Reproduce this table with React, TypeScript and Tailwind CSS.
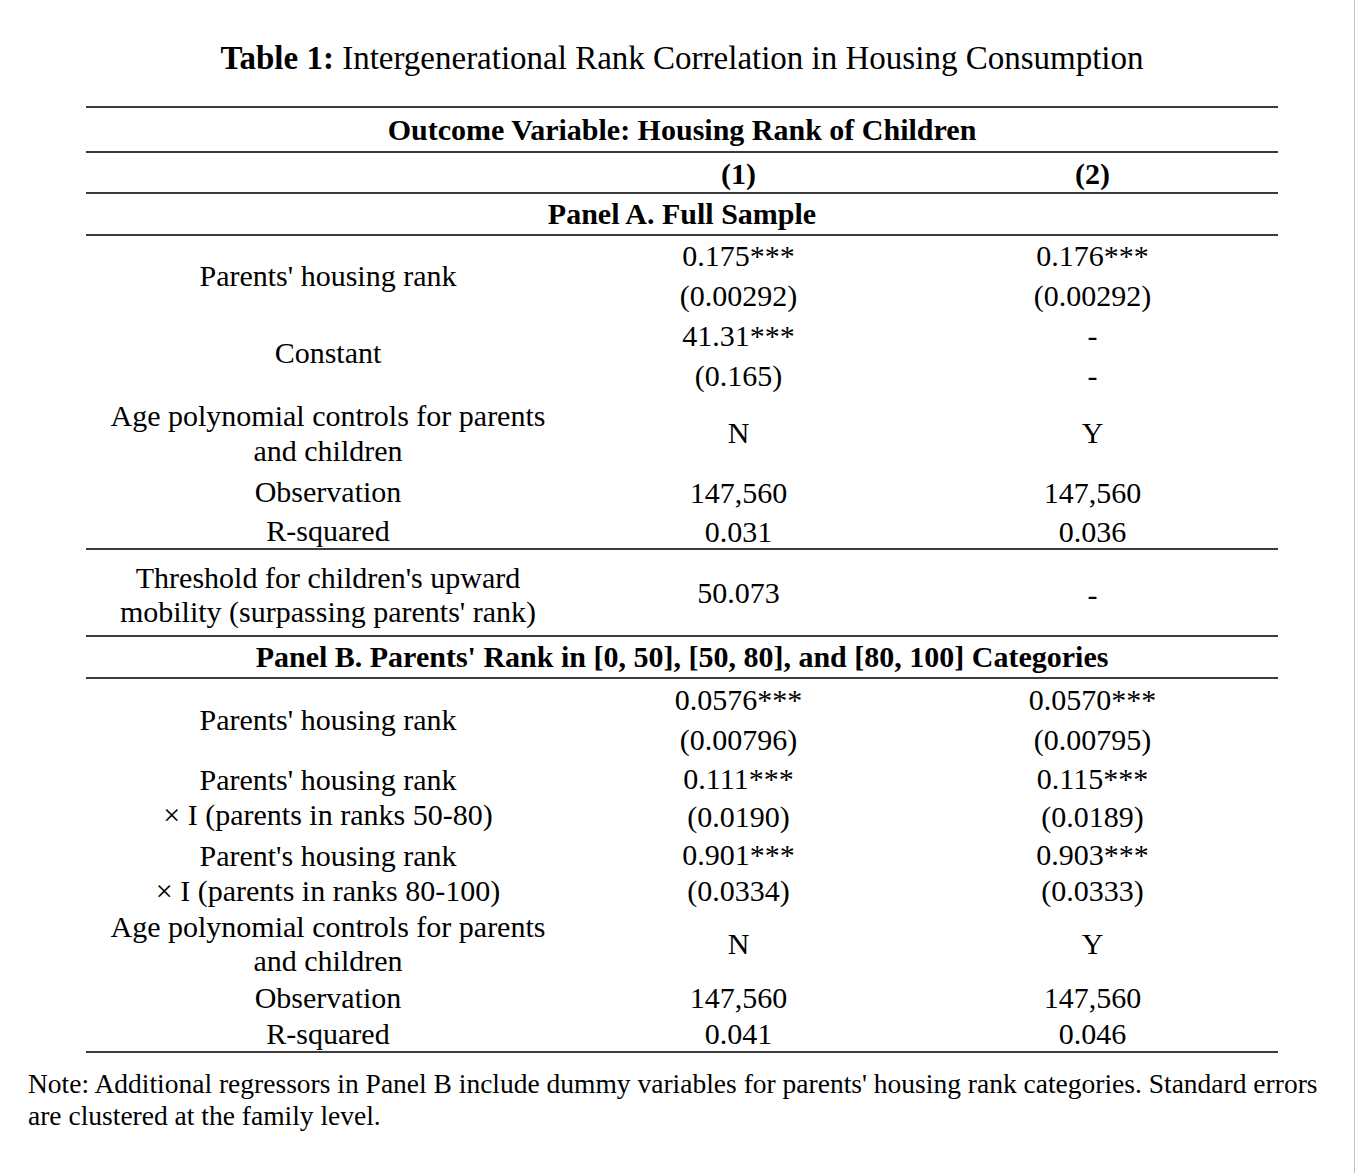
import React from 'react';

const Rule = () => <div className="h-[2px] w-full bg-[#3c3c3c]" />;

const Cell: React.FC<{ children?: React.ReactNode; className?: string }> = ({ children, className = '' }) => (
  <div className={`flex items-center justify-center text-center whitespace-nowrap ${className}`}>{children}</div>
);

const Label: React.FC<{ lines: string[]; className?: string }> = ({ lines, className = '' }) => (
  <div className={`flex flex-col items-center justify-center text-center whitespace-nowrap ${className}`}>
    {lines.map((l) => (
      <span key={l}>{l}</span>
    ))}
  </div>
);

export default function App() {
  return (
    <div className="w-[1356px] h-[1173px] bg-white">
      <div
        className="w-[1355px] h-[1173px] border-r border-[#c4c4c4] text-black"
        style={{ fontFamily: '"Liberation Serif", "Times New Roman", serif' }}
      >
        {/* Caption */}
        <div className="pt-[38px] pl-[86px] w-[1278px]">
          <div className="h-[40px] leading-[40px] text-[33px] text-center whitespace-nowrap">
            <span className="font-bold">Table 1:</span> Intergenerational Rank Correlation in Housing Consumption
          </div>
        </div>

        {/* Table */}
        <div className="ml-[86px] mt-[28px] w-[1192px] text-[30px] leading-[34px]">
          <Rule />
          <Cell className="h-[43px] font-bold">Outcome Variable: Housing Rank of Children</Cell>
          <Rule />
          <div className="grid grid-cols-[484px_337px_371px] h-[39px] font-bold">
            <Cell />
            <Cell className="pt-[3px]">(1)</Cell>
            <Cell className="pt-[3px]">(2)</Cell>
          </div>
          <Rule />
          <Cell className="h-[40px] font-bold">Panel A. Full Sample</Cell>
          <Rule />

          <div className="grid grid-cols-[484px_337px_371px] grid-rows-[40px_40px_40px_40px_74px_46px_32px]">
            <Cell className="row-span-2">Parents' housing rank</Cell>
            <Cell>0.175***</Cell>
            <Cell>0.176***</Cell>
            <Cell>(0.00292)</Cell>
            <Cell>(0.00292)</Cell>

            <Cell className="row-span-2 pb-[6px]">Constant</Cell>
            <Cell>41.31***</Cell>
            <Cell>-</Cell>
            <Cell>(0.165)</Cell>
            <Cell>-</Cell>

            <Label className="leading-[35px]" lines={['Age polynomial controls for parents', 'and children']} />
            <Cell>N</Cell>
            <Cell>Y</Cell>

            <Cell className="pb-[3px]">Observation</Cell>
            <Cell>147,560</Cell>
            <Cell>147,560</Cell>

            <Cell className="pb-[3px]">R-squared</Cell>
            <Cell>0.031</Cell>
            <Cell>0.036</Cell>
          </div>
          <Rule />

          <div className="grid grid-cols-[484px_337px_371px] h-[85px]">
            <Label className="leading-[34px] pt-[4px]" lines={["Threshold for children's upward", "mobility (surpassing parents' rank)"]} />
            <Cell>50.073</Cell>
            <Cell className="pt-[4px]">-</Cell>
          </div>
          <Rule />
          <Cell className="h-[40px] font-bold">Panel B. Parents' Rank in [0, 50], [50, 80], and [80, 100] Categories</Cell>
          <Rule />

          <div className="grid grid-cols-[484px_337px_371px] grid-rows-[41px_40px_37px_40px_36px_36px_70px_37px_35px]">
            <Cell className="row-span-2">Parents' housing rank</Cell>
            <Cell>0.0576***</Cell>
            <Cell>0.0570***</Cell>
            <Cell>(0.00796)</Cell>
            <Cell>(0.00795)</Cell>

            <Label className="row-span-2 leading-[35px] pb-[3px]" lines={["Parents' housing rank", '× I (parents in ranks 50-80)']} />
            <Cell>0.111***</Cell>
            <Cell>0.115***</Cell>
            <Cell>(0.0190)</Cell>
            <Cell>(0.0189)</Cell>

            <Label className="row-span-2 leading-[35px]" lines={["Parent's housing rank", '× I (parents in ranks 80-100)']} />
            <Cell>0.901***</Cell>
            <Cell>0.903***</Cell>
            <Cell>(0.0334)</Cell>
            <Cell>(0.0333)</Cell>

            <Label className="leading-[34px]" lines={['Age polynomial controls for parents', 'and children']} />
            <Cell>N</Cell>
            <Cell>Y</Cell>

            <Cell>Observation</Cell>
            <Cell>147,560</Cell>
            <Cell>147,560</Cell>

            <Cell>R-squared</Cell>
            <Cell>0.041</Cell>
            <Cell>0.046</Cell>
          </div>
          <Rule />
        </div>

        {/* Note */}
        <div className="ml-[28px] mt-[15px] text-[27.5px] leading-[32px] whitespace-nowrap">
          Note: Additional regressors in Panel B include dummy variables for parents' housing rank categories. Standard errors
          <br />
          are clustered at the family level.
        </div>
      </div>
    </div>
  );
}
